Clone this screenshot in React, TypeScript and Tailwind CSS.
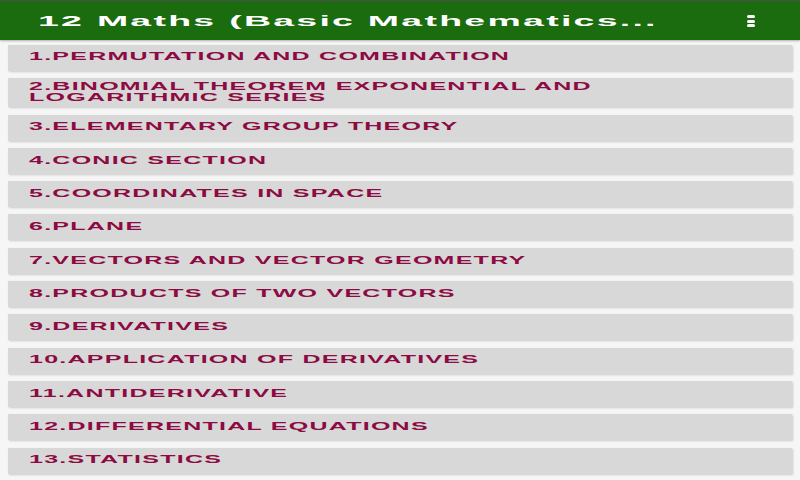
import React from "react";

const items: string[][] = [
  ["1.PERMUTATION AND COMBINATION"],
  ["2.BINOMIAL THEOREM EXPONENTIAL AND", "LOGARITHMIC SERIES"],
  ["3.ELEMENTARY GROUP THEORY"],
  ["4.CONIC SECTION"],
  ["5.COORDINATES IN SPACE"],
  ["6.PLANE"],
  ["7.VECTORS AND VECTOR GEOMETRY"],
  ["8.PRODUCTS OF TWO VECTORS"],
  ["9.DERIVATIVES"],
  ["10.APPLICATION OF DERIVATIVES"],
  ["11.ANTIDERIVATIVE"],
  ["12.DIFFERENTIAL EQUATIONS"],
  ["13.STATISTICS"],
];

export default function App() {
  return (
    <div
      className="w-[800px] h-[480px] overflow-hidden bg-[#f6f6f6]"
      style={{ fontFamily: '"Liberation Sans", Arial, sans-serif' }}
    >
      <div className="h-[1px] bg-[#4e4e4e]" />
      <header className="h-[39px] bg-[#1a6c0f] flex items-center justify-between pl-[38px] pr-[45px] shadow-[0_1px_2px_rgba(0,0,0,0.3)]">
        <span className="inline-block origin-left scale-x-[2.5] text-[15px] font-bold tracking-[0.9px] text-white leading-none whitespace-nowrap">
          12 Maths (Basic Mathematics...
        </span>
        <div className="flex flex-col gap-[1.3px] pt-[1px]">
          <span className="block w-[8px] h-[3px] rounded-full bg-white" />
          <span className="block w-[8px] h-[3px] rounded-full bg-white" />
          <span className="block w-[8px] h-[3px] rounded-full bg-white" />
        </div>
      </header>
      <div className="flex flex-col gap-[7.3px] px-[8px] pt-[4.5px]">
        {items.map((lines, i) => (
          <div
            key={i}
            className={`${lines.length > 1 ? "h-[29.5px]" : "h-[26px]"} bg-[#d8d8d8] flex flex-col justify-center pl-[21px] shadow-[1px_1px_2px_rgba(0,0,0,0.18)]`}
          >
            {lines.map((l, j) => (
              <span
                key={j}
                className="block origin-left scale-x-[2.5] text-[10px] font-bold tracking-[0.5px] text-[#8c0b42] leading-[10.5px] whitespace-nowrap"
              >
                {l}
              </span>
            ))}
          </div>
        ))}
      </div>
    </div>
  );
}
